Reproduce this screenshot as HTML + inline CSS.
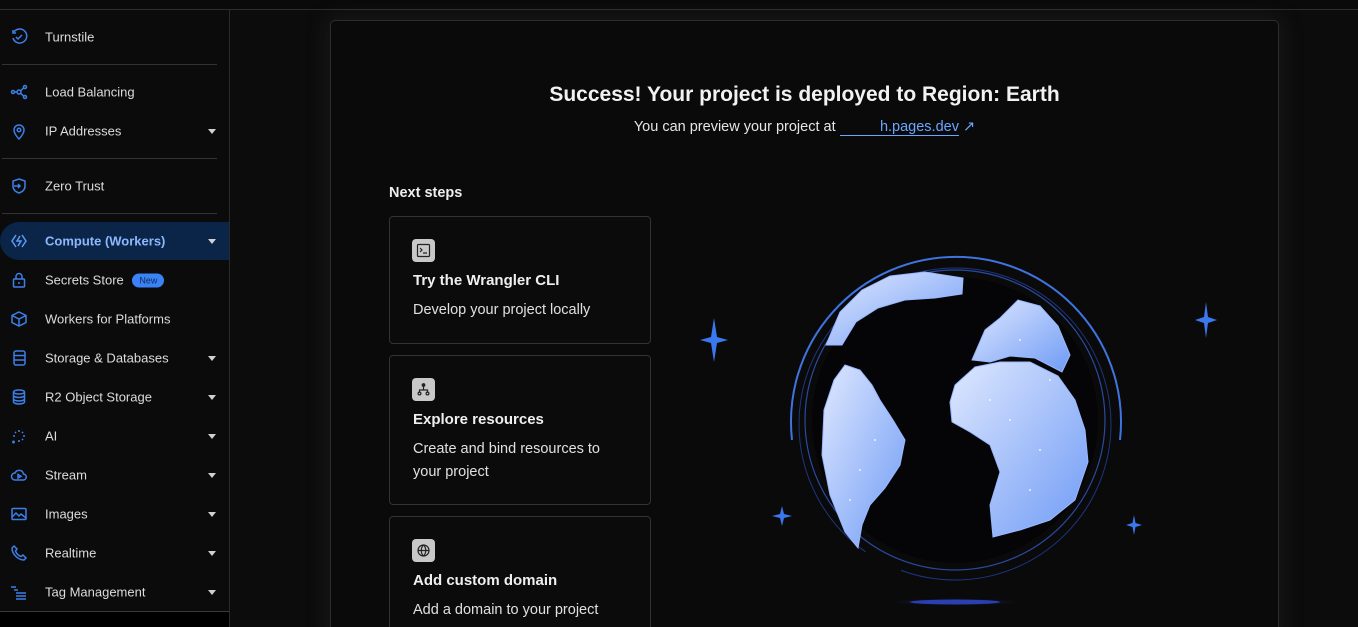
<!DOCTYPE html>
<html style="width:1358px;height:627px;overflow:hidden"><head><meta charset="utf-8"><style>
*{margin:0;padding:0;box-sizing:border-box}
body{width:1358px;height:627px;background:#0c0c0d;font-family:"Liberation Sans",sans-serif;color:#e6e6e6;position:relative;overflow:hidden}
.top{position:absolute;left:0;top:0;width:1358px;height:10px;background:#0a0a0a;border-bottom:1px solid #2e2e2e}
.side{position:absolute;left:0;top:10px;width:230px;height:617px;background:#0b0b0c;border-right:1px solid #2a2a2a}
.it{position:absolute;left:0;width:229px;height:38px;font-size:13px;color:#dcdcdc}
.it span.t{position:absolute;left:45px;top:50%;transform:translateY(-50%)}
.it svg{position:absolute;left:10px;top:10px}
.car{position:absolute;left:208px;top:17px;width:0;height:0;border-left:4.5px solid transparent;border-right:4.5px solid transparent;border-top:5px solid #d0d0d0}
.div{position:absolute;left:2px;width:215px;height:1px;background:#333}
.panel{position:absolute;left:330px;top:20px;width:949px;height:620px;background:#0a0a0a;border:1px solid #2c2c2c;border-radius:5px;box-shadow:0 0 20px 4px rgba(60,60,60,.25)}
.card{position:absolute;left:389px;width:262px;border:1px solid #333;border-radius:4px;background:#0b0b0b}
.ic{position:absolute;left:22px;top:22px;width:23px;height:23px;background:#c8c8c8;border-radius:4px}
.ct{position:absolute;left:23px;font-size:15px;font-weight:bold;color:#efefef}
.cd{position:absolute;left:23px;font-size:14.5px;color:#e0e0e0;line-height:23px}
</style></head><body>
<div class="top"></div>
<div class="side">
 <div class="it" style="top:8px"><svg width="18" height="18" viewBox="0 0 18 18" fill="none" stroke="#3d7fe8" stroke-width="1.5"><path d="M4 4a7 7 0 1 1-1 6"/><path d="M3 2v3h3"/><path d="M6 9l2 2 4-4"/></svg><span class="t">Turnstile</span></div>
 <div class="div" style="top:54px"></div>
 <div class="it" style="top:63px"><svg width="18" height="18" viewBox="0 0 18 18" fill="none" stroke="#3d7fe8" stroke-width="1.5"><circle cx="3" cy="9" r="1.5"/><circle cx="9" cy="9" r="2"/><circle cx="15" cy="4" r="1.5"/><circle cx="15" cy="14" r="1.5"/><path d="M4.5 9h2.5M10.5 8l3-3M10.5 10l3 3"/></svg><span class="t">Load Balancing</span></div>
 <div class="it" style="top:102px"><svg width="18" height="18" viewBox="0 0 18 18" fill="none" stroke="#3d7fe8" stroke-width="1.5"><path d="M9 17s-5-5-5-9a5 5 0 0 1 10 0c0 4-5 9-5 9z"/><circle cx="9" cy="8" r="1.8"/></svg><span class="t">IP Addresses</span><i class="car"></i></div>
 <div class="div" style="top:148px"></div>
 <div class="it" style="top:157px"><svg width="18" height="18" viewBox="0 0 18 18" fill="none" stroke="#3d7fe8" stroke-width="1.5"><path d="M9 2l6 2v5c0 4-3 6-6 7-3-1-6-3-6-7V4z"/><path d="M4 9h6M8 7l2 2-2 2"/></svg><span class="t">Zero Trust</span></div>
 <div class="div" style="top:203px"></div>
 <div class="it" style="top:212px;background:#0a2547;height:38px;border-top-left-radius:20px;border-bottom-left-radius:20px"><svg width="18" height="18" viewBox="0 0 18 18" fill="none" stroke="#5b9af5" stroke-width="1.5"><path d="M6 3L2 9l4 6M12 3l4 6-4 6M10 4L7 9h4l-3 5"/></svg><span class="t" style="color:#8db8ff;font-weight:bold">Compute (Workers)</span><i class="car"></i></div>
 <div class="it" style="top:251px"><svg width="18" height="18" viewBox="0 0 18 18" fill="none" stroke="#3d7fe8" stroke-width="1.5"><rect x="3.5" y="8" width="11" height="8" rx="1"/><path d="M6 8V5.5a3 3 0 0 1 6 0V8M9 11v2"/></svg><span class="t">Secrets Store <span style="display:inline-block;margin-left:5px;background:#3b82f6;color:#0b2a5a;font-size:9px;padding:2px 7px;border-radius:8px;vertical-align:1px">New</span></span></div>
 <div class="it" style="top:290px"><svg width="18" height="18" viewBox="0 0 18 18" fill="none" stroke="#3d7fe8" stroke-width="1.5"><path d="M9 2l7 3.5v7L9 16l-7-3.5v-7z"/><path d="M2 5.5L9 9l7-3.5M9 9v7"/></svg><span class="t">Workers for Platforms</span></div>
 <div class="it" style="top:329px"><svg width="18" height="18" viewBox="0 0 18 18" fill="none" stroke="#3d7fe8" stroke-width="1.5"><rect x="4" y="2" width="11" height="14" rx="2"/><path d="M4 6.5h11M4 11h11"/></svg><span class="t">Storage &amp; Databases</span><i class="car"></i></div>
 <div class="it" style="top:368px"><svg width="18" height="18" viewBox="0 0 18 18" fill="none" stroke="#3d7fe8" stroke-width="1.5"><ellipse cx="9" cy="4" rx="5.5" ry="2"/><path d="M3.5 4v10c0 1 2.5 2 5.5 2s5.5-1 5.5-2V4M3.5 7.5c0 1 2.5 2 5.5 2s5.5-1 5.5-2M3.5 11c0 1 2.5 2 5.5 2s5.5-1 5.5-2"/></svg><span class="t">R2 Object Storage</span><i class="car"></i></div>
 <div class="it" style="top:407px"><svg width="18" height="18" viewBox="0 0 18 18" fill="none" stroke="#3d7fe8" stroke-width="1.6"><path d="M9 3v2M9 13v2M3 9h2M13 9h2M5 5l1 1M12 12l1 1M13 5l-1 1M2 15h3M3.5 13.5v3"/></svg><span class="t">AI</span><i class="car"></i></div>
 <div class="it" style="top:446px"><svg width="18" height="18" viewBox="0 0 18 18" fill="none" stroke="#3d7fe8" stroke-width="1.5"><path d="M5 14a3.5 3.5 0 0 1 0-7 4.5 4.5 0 0 1 8.5 1A3 3 0 0 1 13 14z"/><path d="M8 8.5v3.5l3-1.7z"/></svg><span class="t">Stream</span><i class="car"></i></div>
 <div class="it" style="top:485px"><svg width="18" height="18" viewBox="0 0 18 18" fill="none" stroke="#3d7fe8" stroke-width="1.5"><rect x="2" y="3.5" width="14" height="11" rx="1"/><path d="M2 12l4-4 3 3 2-2 5 4"/></svg><span class="t">Images</span><i class="car"></i></div>
 <div class="it" style="top:524px"><svg width="18" height="18" viewBox="0 0 18 18" fill="none" stroke="#3d7fe8" stroke-width="1.5"><path d="M4 2l3 3-1.5 2a9 9 0 0 0 5.5 5.5L13 11l3 3-2 2C8 16 2 10 2 4z"/></svg><span class="t">Realtime</span><i class="car"></i></div>
 <div class="it" style="top:563px"><svg width="18" height="18" viewBox="0 0 18 18" fill="none" stroke="#3d7fe8" stroke-width="1.6"><path d="M1 4h5M4 7h4M6 10h10M6 13h10M6 16h10"/></svg><span class="t">Tag Management</span><i class="car"></i></div>
 <div class="div" style="top:601px;left:0;width:229px;background:#3a3a3a"></div>
 <div style="position:absolute;left:0;top:602px;width:229px;height:20px;background:#000"></div>
</div>

<div class="panel"></div>
<div style="position:absolute;left:330px;width:949px;top:83px;text-align:center;font-size:21px;font-weight:bold;color:#f2f2f2">Success! Your project is deployed to Region: Earth</div>
<div style="position:absolute;left:330px;width:949px;top:119px;text-align:center;font-size:14.5px;color:#e6e6e6">You can preview your project at <span style="color:#6aa5ff;border-bottom:1px solid #6aa5ff">&nbsp;&nbsp;&nbsp;&nbsp;&nbsp;&nbsp;&nbsp;&nbsp;&nbsp;&nbsp;h.pages.dev</span> <span style="color:#6aa5ff">↗</span></div>
<div style="position:absolute;left:389px;top:185px;font-size:14.5px;font-weight:bold;color:#eee">Next steps</div>

<div class="card" style="top:216px;height:128px"><div class="ic"><svg width="23" height="23" viewBox="0 0 23 23" fill="none" stroke="#222" stroke-width="1.2"><rect x="5.5" y="5.5" width="12" height="12" rx="1"/><path d="M8 9l2 2-2 2M11 14h4"/></svg></div><div class="ct" style="top:55px">Try the Wrangler CLI</div><div class="cd" style="top:82px">Develop your project locally</div></div>
<div class="card" style="top:355px;height:150px"><div class="ic"><svg width="23" height="23" viewBox="0 0 23 23" fill="none" stroke="#222" stroke-width="1.2"><circle cx="11.5" cy="7" r="1.3" fill="#222"/><path d="M11.5 8v4M7.5 14v-2h8v2"/><circle cx="7.5" cy="15.5" r="1.4"/><circle cx="15.5" cy="15.5" r="1.4"/></svg></div><div class="ct" style="top:55px">Explore resources</div><div class="cd" style="top:82px">Create and bind resources to<br>your project</div></div>
<div class="card" style="top:516px;height:130px"><div class="ic"><svg width="23" height="23" viewBox="0 0 23 23" fill="none" stroke="#222" stroke-width="1.2"><circle cx="11.5" cy="11.5" r="5.5"/><path d="M6 11.5h11M11.5 6c-3 3-3 8 0 11M11.5 6c3 3 3 8 0 11"/></svg></div><div class="ct" style="top:55px">Add custom domain</div><div class="cd" style="top:82px">Add a domain to your project</div></div>

<svg style="position:absolute;left:0;top:0" width="1358" height="627">
<defs>
<linearGradient id="g" x1="0" y1="0" x2="1" y2="1"><stop offset="0" stop-color="#dfe8ff"/><stop offset="1" stop-color="#6f9bf5"/></linearGradient>
<radialGradient id="s" cx=".5" cy=".5" r=".5"><stop offset="0" stop-color="#2440a8"/><stop offset="1" stop-color="#0a0a14" stop-opacity="0"/></radialGradient>
</defs>
<ellipse cx="955" cy="602" rx="72" ry="4" fill="url(#s)"/>
<ellipse cx="955" cy="602" rx="45" ry="2.5" fill="#2a3fb0"/>
<path d="M792 440A165 165 0 1 1 1120 440" fill="none" stroke="#3f73e0" stroke-width="2"/>
<circle cx="955" cy="420" r="150" fill="none" stroke="#2a4aa0" stroke-width="1.2"/>
<circle cx="955" cy="424" r="156" fill="none" stroke="#1e3580" stroke-width="1" stroke-dasharray="300 40"/>
<circle cx="955" cy="420" r="143" fill="#050507"/>
<g fill="url(#g)" stroke="#9ab8ff" stroke-width="1">
<path d="M845 365L860 370L872 385L880 400L893 420L905 440L900 465L885 488L870 505L862 525L858 548L845 532L830 495L822 455L824 410L834 380Z"/>
<path d="M955 385L975 367L1000 362L1030 362L1058 376L1075 400L1085 430L1088 462L1075 500L1050 520L1020 530L993 537L990 505L1000 472L990 445L970 432L952 422L950 402Z"/>
<path d="M972 360L985 330L1000 318L1018 300L1040 306L1058 326L1070 355L1062 372L1035 358L1010 356L990 362Z"/>
<path d="M826 345L840 312L862 290L890 276L925 272L963 278L962 294L935 298L905 300L878 308L856 322L842 345Z"/>
</g>
<g fill="#fff" opacity=".8"><circle cx="990" cy="400" r="1"/><circle cx="1010" cy="420" r="1"/><circle cx="1040" cy="450" r="1"/><circle cx="1030" cy="490" r="1"/><circle cx="860" cy="470" r="1"/><circle cx="875" cy="440" r="1"/><circle cx="850" cy="500" r="1"/><circle cx="1020" cy="340" r="1"/><circle cx="1050" cy="380" r="1"/></g>
<g fill="#3b78f0">
<path d="M714 318L717 337L728 340L717 343L714 362L711 343L700 340L711 337Z"/>
<path d="M1206 302L1208 317L1217 320L1208 323L1206 338L1204 323L1195 320L1204 317Z"/>
<path d="M782 506L784 514L792 516L784 518L782 526L780 518L772 516L780 514Z"/>
<path d="M1134 515L1135.5 523L1142 525L1135.5 527L1134 535L1132.5 527L1126 525L1132.5 523Z"/>
</g>
</svg>
</body></html>
